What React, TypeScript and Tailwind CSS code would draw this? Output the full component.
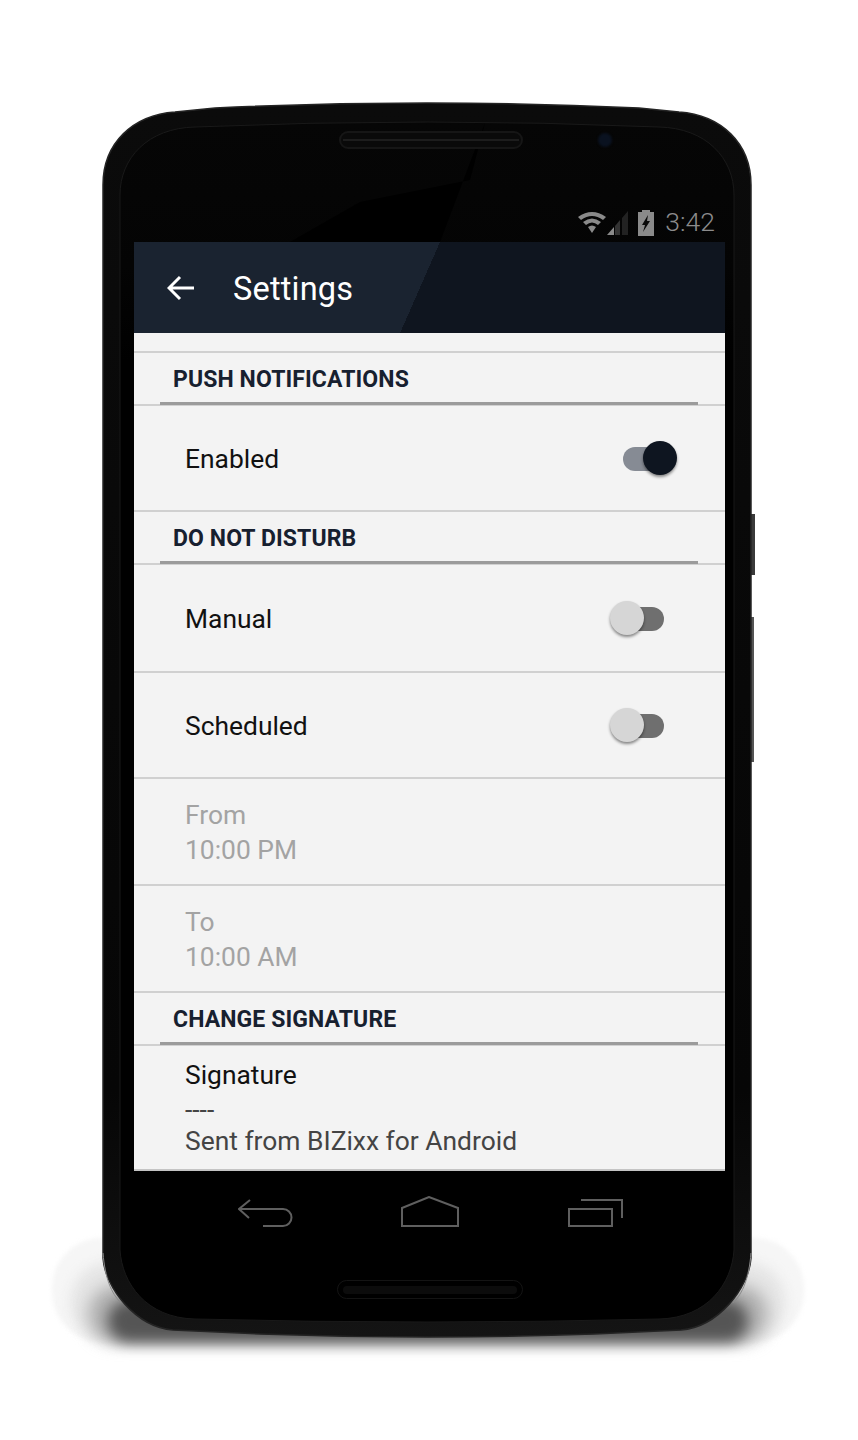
import React from 'react';

const font = { fontFamily: 'Roboto, sans-serif' };

const SectionHeader = ({ title }: { title: string }) => (
  <div className="h-[53px] border-b-2 border-[#d0d0d0] shrink-0">
    <div className="h-[52px] ml-[26px] mr-[27px] border-b-[3px] border-[#9b9b9b] pl-[13px] pt-[4px] flex items-center">
      <span className="text-[23px] font-bold leading-none text-[#17202f] tracking-[0.1px]">{title}</span>
    </div>
  </div>
);

const Toggle = ({ on }: { on: boolean }) =>
  on ? (
    <div className="w-[54px] h-[36px] mr-[48px] relative">
      <div className="absolute left-0 top-[6px] w-[50px] h-[24px] rounded-full bg-[#868b94]" />
      <div className="absolute right-[0px] top-0 w-[34px] h-[34px] rounded-full bg-[#0e1520] shadow-[0_2px_3px_rgba(0,0,0,0.45)]" />
    </div>
  ) : (
    <div className="w-[54px] h-[36px] mr-[61px] relative">
      <div className="absolute right-0 top-[6px] w-[48px] h-[24px] rounded-full bg-[#6f6f6f]" />
      <div className="absolute left-0 top-0 w-[34px] h-[34px] rounded-full bg-[#d6d6d6] shadow-[0_2px_3px_rgba(0,0,0,0.45)]" />
    </div>
  );

const ToggleRow = ({ label, on, height }: { label: string; on: boolean; height: string }) => (
  <div className={`${height} shrink-0 border-b-2 border-[#d0d0d0] pl-[51px] pt-[2px] flex items-center justify-between`}>
    <span className="text-[26.4px] leading-none text-[#111]">{label}</span>
    <Toggle on={on} />
  </div>
);

const TimeRow = ({ label, value }: { label: string; value: string }) => (
  <div className="h-[107px] shrink-0 border-b-2 border-[#d0d0d0] pl-[51px] pt-[2px] flex flex-col justify-center gap-[9px] text-[26.4px] leading-[26px] text-[#a3a3a3]">
    <span>{label}</span>
    <span>{value}</span>
  </div>
);

// phone silhouette, drawn behind the contents
const PhoneBody = () => (
  <svg className="absolute left-0 top-0 overflow-visible" width="648" height="1232" viewBox="0 0 648 1232">
    <defs>
      <linearGradient id="face" x1="0" y1="0" x2="0" y2="1">
        <stop offset="0" stopColor="#060606" />
        <stop offset="0.12" stopColor="#040404" />
        <stop offset="0.2" stopColor="#000" />
        <stop offset="1" stopColor="#000" />
      </linearGradient>
      <linearGradient id="rim" x1="0" y1="0" x2="0" y2="1">
        <stop offset="0" stopColor="#0b0b0b" />
        <stop offset="0.8" stopColor="#060606" />
        <stop offset="1" stopColor="#141414" />
      </linearGradient>
    </defs>
    <path
      d="M0 82 C0 40 30 12 72 9 L112 5 Q324 -5 536 5 L576 9 C618 12 648 40 648 82 V1155 C646 1185 615 1224 578 1227 L491 1231 Q324 1237 157 1231 L70 1227 C33 1224 2 1185 0 1155 Z"
      fill="url(#rim)"
      stroke="#242424"
      strokeWidth="1.5"
    />
    <path
      d="M17 92 C17 55 45 25 92 24 Q324 14 556 24 C603 25 631 55 631 92 V1147 C629 1180 605 1215 556 1216 Q324 1222 92 1216 C43 1215 19 1180 17 1147 Z"
      fill="url(#face)"
      stroke="#191919"
      strokeWidth="1"
    />
    <path d="M382 20 L367 77 L257 99 L187 139 H337 Z" fill="#000" />
    <path d="M0 1150 C2 1175 8 1190 18 1200 M648 1150 C646 1175 640 1190 630 1200" fill="none" stroke="#8a8a8a" strokeWidth="1" />
  </svg>
);

export default function App() {
  return (
    <div className="relative w-[858px] h-[1440px] bg-white pl-[103px] pt-[103px] overflow-hidden" style={font}>
      {/* shadow under the phone */}
      <div className="absolute left-[52px] top-[1238px] w-[752px] h-[104px] rounded-[50px] bg-[#f6f6f6] blur-[2px]" />
      <div className="absolute left-[70px] top-[1262px] w-[716px] h-[80px] rounded-[60px] bg-[#e6e6e6] blur-[6px]" />
      <div className="absolute left-[88px] top-[1285px] w-[680px] h-[58px] rounded-[50px] bg-[#b0b0b0] blur-[8px]" />
      <div className="absolute left-[108px] top-[1300px] w-[640px] h-[42px] rounded-[40px] bg-[#555] blur-[7px]" />

      {/* side buttons */}
      <div className="absolute left-[750px] top-[514px] w-[5px] h-[61px] bg-[#3a3a3a]" />
      <div className="absolute left-[750px] top-[617px] w-[4px] h-[145px] bg-[#555]" />

      <div className="relative w-[648px] h-[1232px] flex flex-col pl-[31px] pr-[26px]">
        <PhoneBody />

        {/* speaker + camera */}
        <div className="relative h-[25px] mt-[28px] shrink-0 flex justify-center">
          <div className="w-[184px] h-[18px] ml-[2px] rounded-full border-2 border-[#161616] bg-[#0a0a0a] flex items-center px-[2px]">
            <div className="w-full h-[2px] bg-[#1d1d1d]" />
          </div>
          <div className="absolute right-[113px] top-[2px] w-[14px] h-[14px] rounded-full bg-[#0a1220] blur-[1px]" />
        </div>

        {/* status bar */}
        <div className="relative h-[46px] mt-[40px] shrink-0 flex items-center justify-end pr-[10px] pt-[7px]">
          <svg width="50" height="26" viewBox="0 0 50 26">
            <path d="M0 7 Q14 -3 28 7 L25 10 Q14 2 3 10 Z" fill="#8a8a8a" />
            <path d="M5 12 Q14 5 23 12 L20 15 Q14 10 8 15 Z" fill="#8a8a8a" />
            <path d="M10 17 Q14 14 18 17 L14 23 Z" fill="#8a8a8a" />
            <path d="M29 25 L36 17 V25 Z" fill="#8a8a8a" />
            <path d="M37 16 L42 10 V25 H37 Z" fill="#333" />
            <path d="M44 8 L50 1 V25 H44 Z" fill="#222" />
          </svg>
          <svg className="ml-[10px]" width="16" height="26" viewBox="0 0 16 26">
            <path d="M4 0 H12 V2 H16 V26 H0 V2 H4 Z" fill="#8a8a8a" />
            <path d="M10 5 L4 15 H7 L5 22 L12 11 H9 Z" fill="#0a0a0a" />
          </svg>
          <span className="ml-[11px] text-[26.5px] font-light leading-none text-[#8c8c8c]">3:42</span>
        </div>

        {/* screen */}
        <div className="relative w-[591px] flex flex-col shrink-0">
          <div className="h-[91px] shrink-0 flex items-center pl-[33px] gap-[38px] bg-[linear-gradient(113.7deg,#1a2330_48.5%,#0f151f_48.5%)]">
            <svg width="28" height="26" viewBox="0 0 28 26" fill="none" stroke="#fff" strokeWidth="3">
              <path d="M27 13 H3 M13 2 L2 13 L13 24" />
            </svg>
            <span className="text-[32.5px] leading-none text-white tracking-[0.2px] mt-[3px]">Settings</span>
          </div>

          <div className="bg-[#f3f3f3] h-[838px] flex flex-col overflow-hidden">
            <div className="h-[20px] shrink-0 border-b-2 border-[#d0d0d0]" />
            <SectionHeader title="PUSH NOTIFICATIONS" />
            <ToggleRow label="Enabled" on height="h-[106px]" />
            <SectionHeader title="DO NOT DISTURB" />
            <ToggleRow label="Manual" on={false} height="h-[108px]" />
            <ToggleRow label="Scheduled" on={false} height="h-[106px]" />
            <TimeRow label="From" value="10:00 PM" />
            <TimeRow label="To" value="10:00 AM" />
            <SectionHeader title="CHANGE SIGNATURE" />
            <div className="h-[125px] shrink-0 border-b-2 border-[#c4c4c4] pl-[51px] pt-[13px] flex flex-col text-[26.4px] leading-[33px]">
              <span className="text-[#111]">Signature</span>
              <span className="text-[#444] mt-[2px] mb-[-2px]">----</span>
              <span className="text-[#444]">Sent from BIZixx for Android</span>
            </div>
          </div>
        </div>

        {/* nav buttons */}
        <div className="relative shrink-0 flex mt-[25px] pl-[104px]">
          <svg width="56" height="32" viewBox="0 0 56 32" fill="none" stroke="#5f5f5f" strokeWidth="2">
            <path d="M12 4 L1 13 L11 22 M1 13 H45 A8.5 8.5 0 0 1 45 30 H25" />
          </svg>
          <svg className="ml-[106px]" width="60" height="32" viewBox="0 0 60 32" fill="none" stroke="#5f5f5f" strokeWidth="2">
            <path d="M2 30 V12 L29 1 L58 12 V30 Z" />
          </svg>
          <svg className="ml-[107px]" width="57" height="32" viewBox="0 0 57 32" fill="none" stroke="#5f5f5f" strokeWidth="2">
            <path d="M2 13 H45 V30 H2 Z M14 4 H55 V22" />
          </svg>
        </div>

        {/* bottom speaker */}
        <div className="relative flex justify-center mt-[52px] shrink-0">
          <div className="w-[186px] h-[19px] rounded-full border border-[#141414] flex items-center justify-center">
            <div className="w-[174px] h-[8px] rounded-full bg-[#0c0c0c]" />
          </div>
        </div>
      </div>
    </div>
  );
}
